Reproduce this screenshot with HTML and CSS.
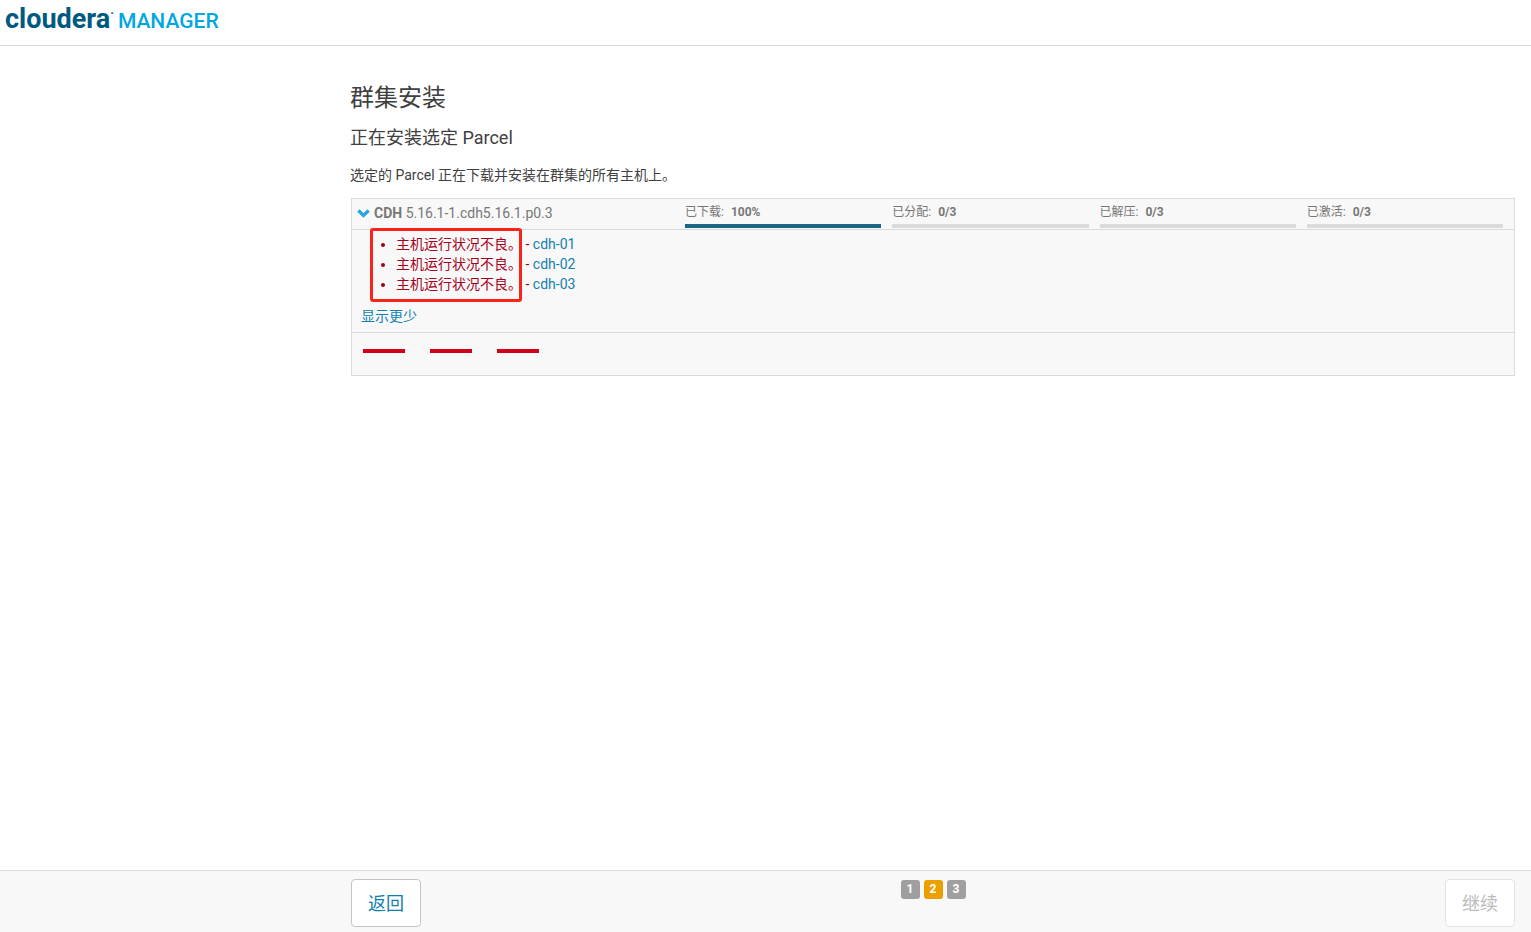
FILE: index.html
```html
<!DOCTYPE html>
<html lang="zh-CN">
<head>
    <meta charset="UTF-8">
    <meta name="viewport" content="width=device-width, initial-scale=1.0">
    <title>群集安装 - Cloudera Manager</title>
    <link rel="stylesheet" href="styles.css">
</head>
<body>
    <header class="navbar">
        <a href="#" class="brand"><span class="brand-name">cloudera<span class="brand-dot">·</span></span><span class="brand-product">MANAGER</span></a>
    </header>

    <main class="content">
        <h1>群集安装</h1>
        <h2>正在安装选定 Parcel</h2>
        <p class="intro">选定的 Parcel 正在下载并安装在群集的所有主机上。</p>

        <section class="parcel">
            <div class="parcel-header">
                <div class="parcel-name">
                    <svg class="chevron" width="13" height="9" viewBox="0 0 13 9" aria-hidden="true">
                        <path d="M1.4 1.6 L6.5 6.4 L11.6 1.6" fill="none" stroke="#29a7de" stroke-width="3.4"/>
                    </svg>
                    <span><strong>CDH</strong> 5.16.1-1.cdh5.16.1.p0.3</span>
                </div>
                <div class="stage">
                    <div class="stage-label">已下载: <strong>100%</strong></div>
                    <div class="bar"><div class="bar-fill" style="width: 100%"></div></div>
                </div>
                <div class="stage">
                    <div class="stage-label">已分配: <strong>0/3</strong></div>
                    <div class="bar"><div class="bar-fill" style="width: 0%"></div></div>
                </div>
                <div class="stage">
                    <div class="stage-label">已解压: <strong>0/3</strong></div>
                    <div class="bar"><div class="bar-fill" style="width: 0%"></div></div>
                </div>
                <div class="stage">
                    <div class="stage-label">已激活: <strong>0/3</strong></div>
                    <div class="bar"><div class="bar-fill" style="width: 0%"></div></div>
                </div>
            </div>

            <div class="parcel-errors">
                <ul>
                    <li>主机运行状况不良。 - <a href="#">cdh-01</a></li>
                    <li>主机运行状况不良。 - <a href="#">cdh-02</a></li>
                    <li>主机运行状况不良。 - <a href="#">cdh-03</a></li>
                </ul>
                <a href="#" class="show-less">显示更少</a>
                <div class="highlight"></div>
            </div>

            <div class="parcel-hosts">
                <div class="host"></div>
                <div class="host"></div>
                <div class="host"></div>
            </div>
        </section>
    </main>

    <footer class="wizard-footer">
        <button type="button" class="btn">返回</button>
        <div class="steps">
            <span class="step">1</span>
            <span class="step active">2</span>
            <span class="step">3</span>
        </div>
        <button type="button" class="btn" disabled>继续</button>
    </footer>
</body>
</html>
```

FILE: styles.css
```css
* {
    margin: 0;
    padding: 0;
    box-sizing: border-box;
}

body {
    display: flex;
    flex-direction: column;
    min-height: 100vh;
    background: #fff;
    color: #404040;
    font-family: Roboto, "Noto Sans CJK SC", sans-serif;
    font-size: 14px;
    line-height: 20px;
}

a {
    color: #1180b0;
    text-decoration: none;
}

.navbar {
    height: 46px;
    padding: 3px 5px;
    border-bottom: 1px solid #dbdbdb;
}

.brand {
    display: inline-flex;
    align-items: baseline;
    gap: 4px;
    line-height: 32px;
}

.brand-name {
    color: #00597f;
    font-size: 27px;
    font-weight: 700;
}

.brand-dot {
    font-size: 12px;
    vertical-align: super;
    line-height: 1;
}

.brand-product {
    color: #00a7e1;
    font-size: 21px;
    font-weight: 500;
}

.content {
    flex: 1;
    padding: 36px 16px 36px 350px;
}

h1 {
    font-size: 24px;
    font-weight: 400;
    line-height: 32px;
    margin-bottom: 12px;
}

h2 {
    font-size: 18px;
    font-weight: 400;
    line-height: 24px;
    margin-bottom: 15px;
}

.intro {
    margin-bottom: 13px;
}

.parcel {
    margin-left: 1px;
    background: #f8f8f8;
    border: 1px solid #dbdbdb;
}

.parcel-header {
    display: grid;
    grid-template-columns: 317px repeat(4, 1fr);
    gap: 11px;
    height: 31px;
    padding: 0 11px 0 5px;
    border-bottom: 1px solid #dbdbdb;
    color: #777;
}

.parcel-name {
    display: flex;
    align-items: center;
    gap: 4px;
    padding-bottom: 2px;
}

.stage {
    display: flex;
    flex-direction: column;
    justify-content: space-between;
    padding: 3px 0 1px;
}

.stage-label {
    font-size: 12px;
}

.stage-label strong {
    margin-left: 4px;
}

.bar {
    height: 4px;
    background: #dbdbdb;
}

.bar-fill {
    height: 4px;
    background: #1b6684;
}

.parcel-errors {
    position: relative;
    padding: 4px 9px 6px;
    border-bottom: 1px solid #dbdbdb;
}

.parcel-errors ul {
    margin-bottom: 12px;
    padding-left: 35px;
    color: #a50019;
}

.show-less {
    display: block;
}

/* box around the failing hosts */
.highlight {
    position: absolute;
    top: -2px;
    left: 18px;
    width: 152px;
    height: 74px;
    border: 3px solid #fc2418;
    border-radius: 3px;
}

.parcel-hosts {
    display: flex;
    gap: 25px;
    height: 42px;
    padding: 16px 11px;
}

.host {
    width: 42px;
    height: 4px;
    background: #d0021b;
}

.wizard-footer {
    display: flex;
    justify-content: space-between;
    align-items: flex-start;
    height: 62px;
    padding: 8px 16px 5px 351px;
    background: #f8f8f8;
    border-top: 1px solid #dbdbdb;
}

.btn {
    width: 70px;
    height: 48px;
    padding-bottom: 2px;
    background: #fff;
    border: 1px solid #c4c4c4;
    border-radius: 4px;
    color: #1180b0;
    font-family: inherit;
    font-size: 18px;
    cursor: pointer;
}

.btn:disabled {
    border-color: #e2e2e2;
    color: #bbb;
    cursor: default;
}

.steps {
    display: flex;
    gap: 4px;
    padding-top: 1px;
}

.step {
    width: 19px;
    height: 19px;
    background: #9f9f9f;
    border-radius: 3px;
    color: #fff;
    font-size: 12px;
    font-weight: 700;
    line-height: 19px;
    text-align: center;
}

.step.active {
    background: #eba000;
}
```
